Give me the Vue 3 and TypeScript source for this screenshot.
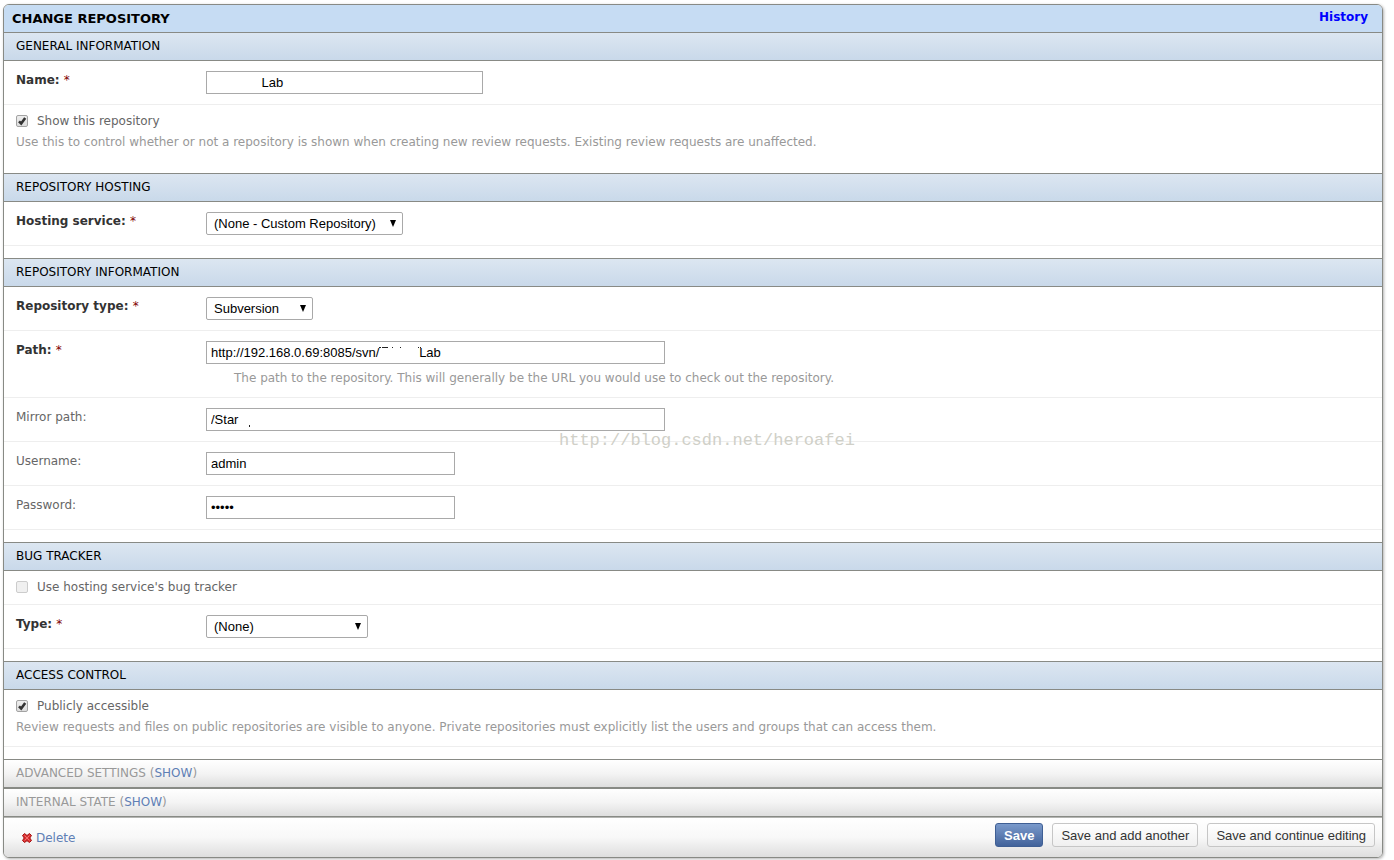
<script setup lang="ts">
import { ref } from 'vue'

const name = ref(' '.repeat(14) + 'Lab')
const path = ref('http://192.168.0.69:8085/svn/' + ' '.repeat(11) + 'Lab')
const mirrorPath = ref('/Star')
const username = ref('admin')
const password = ref('admin')
const visible = ref(true)
const publicAccess = ref(true)
const hostingBugTracker = ref(false)
</script>

<template>
  <main class="module">
    <header class="title">
      <h1>CHANGE REPOSITORY</h1>
      <a href="#history">History</a>
    </header>

    <form @submit.prevent>
      <section>
        <h2>GENERAL INFORMATION</h2>
        <div class="row">
          <label class="required" for="name">Name: <span class="star">*</span></label>
          <div class="field"><input id="name" v-model="name" class="text medium" type="text" /></div>
        </div>
        <div class="row stack borderless">
          <div class="check">
            <input id="visible" v-model="visible" type="checkbox" />
            <label for="visible">Show this repository</label>
          </div>
          <p class="help">Use this to control whether or not a repository is shown when creating new review requests. Existing review requests are unaffected.</p>
        </div>
      </section>

      <section>
        <h2>REPOSITORY HOSTING</h2>
        <div class="row">
          <label class="required" for="hosting">Hosting service: <span class="star">*</span></label>
          <div class="field">
            <select id="hosting" class="hosting"><option>(None - Custom Repository)</option></select>
          </div>
        </div>
      </section>

      <section>
        <h2>REPOSITORY INFORMATION</h2>
        <div class="row">
          <label class="required" for="tool">Repository type: <span class="star">*</span></label>
          <div class="field">
            <select id="tool" class="tool"><option>Subversion</option></select>
          </div>
        </div>
        <div class="row">
          <label class="required" for="path">Path: <span class="star">*</span></label>
          <div class="field">
            <input id="path" v-model="path" class="text long" type="text" />
            <svg class="marks path-marks" viewBox="0 0 48 10" aria-hidden="true">
              <path d="M2 .5h2M5 .5h6M15 .5h1M23 .5h1M41 .5h1M43 .5h1" />
            </svg>
            <p class="help indent">The path to the repository. This will generally be the URL you would use to check out the repository.</p>
          </div>
        </div>
        <div class="row">
          <label for="mirror">Mirror path:</label>
          <div class="field">
            <input id="mirror" v-model="mirrorPath" class="text long" type="text" />
            <svg class="marks mirror-marks" viewBox="0 0 2 2" aria-hidden="true"><path d="M1.500 0v2" /></svg>
          </div>
        </div>
        <div class="row">
          <label for="username">Username:</label>
          <div class="field"><input id="username" v-model="username" class="text short" type="text" /></div>
        </div>
        <div class="row">
          <label for="password">Password:</label>
          <div class="field"><input id="password" v-model="password" class="text short" type="password" /></div>
        </div>
      </section>

      <section>
        <h2>BUG TRACKER</h2>
        <div class="row stack">
          <div class="check">
            <input id="tracker" v-model="hostingBugTracker" type="checkbox" disabled />
            <label for="tracker">Use hosting service's bug tracker</label>
          </div>
        </div>
        <div class="row">
          <label class="required" for="type">Type: <span class="star">*</span></label>
          <div class="field">
            <select id="type" class="type"><option>(None)</option></select>
          </div>
        </div>
      </section>

      <section>
        <h2>ACCESS CONTROL</h2>
        <div class="row stack">
          <div class="check">
            <input id="public" v-model="publicAccess" type="checkbox" />
            <label for="public">Publicly accessible</label>
          </div>
          <p class="help">Review requests and files on public repositories are visible to anyone. Private repositories must explicitly list the users and groups that can access them.</p>
        </div>
      </section>

      <h2 class="collapsed">ADVANCED SETTINGS (<a href="#advanced">SHOW</a>)</h2>
      <h2 class="collapsed">INTERNAL STATE (<a href="#internal">SHOW</a>)</h2>

      <footer class="submit-row">
        <a class="delete" href="#delete">
          <svg viewBox="0 0 10 10" aria-hidden="true">
            <path d="M2.5 .5 5 2.500 7.500 .5 9.500 2.500 7.800 5 9.500 7.500 7.500 9.500 5 7.700 2.500 9.500 .5 7.500 2.200 5 .5 2.500z" />
            <path class="shine" d="M2.500 2.500 7.500 7.500M7.500 2.500 2.500 7.500" />
          </svg>
          Delete
        </a>
        <div class="actions">
          <button class="primary" type="submit">Save</button>
          <button type="button">Save and add another</button>
          <button type="button">Save and continue editing</button>
        </div>
      </footer>
    </form>

    <span class="watermark">http://blog.csdn.net/heroafei</span>
  </main>
</template>

<style>
body {
  background: #fff;
}
</style>

<style scoped>
.module {
  position: relative;
  margin: 4px 11px 2px 3px;
  border: 1px solid #888a85;
  border-radius: 6px;
  box-shadow: 1px 1px 3px rgba(0, 0, 0, 0.3);
  overflow: hidden;
  font: 12px/16px "DejaVu Sans", Verdana, sans-serif;
  color: #666;
}

.title {
  display: flex;
  justify-content: space-between;
  padding: 0 14px 0 8px;
  background: #c6dcf3;
  line-height: 27px;
}

.title h1 {
  margin: 0;
  font-size: 13px;
  font-weight: bold;
  color: #000;
}

.title a {
  font-weight: bold;
  line-height: 24px;
  color: #00f;
  text-decoration: none;
}

section {
  padding-bottom: 12px;
}

h2 {
  margin: 0;
  padding: 0 12px;
  border: solid #888a85;
  border-width: 1px 0;
  background: linear-gradient(#dce6f1, #c9d9ea);
  font-size: 12px;
  font-weight: normal;
  line-height: 27px;
  color: #000;
}

h2.collapsed {
  background: linear-gradient(#fff, #f4f4f4 50%, #dedede);
  color: #999;
}

.collapsed a,
.delete {
  color: #5f7fb5;
  text-decoration: none;
}

.row {
  display: flex;
  align-items: flex-start;
  padding: 10px 12px;
  border-bottom: 1px solid #eee;
}

.row > label {
  flex: 0 0 190px;
  line-height: 18px;
}

.row .required {
  font-weight: bold;
  color: #333;
}

.star {
  font-weight: normal;
  color: #800000;
}

.field {
  position: relative;
  display: flex;
  flex-direction: column;
  align-items: flex-start;
}

.stack {
  flex-direction: column;
  gap: 5px;
  padding: 8px 12px 9px;
}

.borderless {
  border-bottom: 0;
}

.check {
  display: flex;
  align-items: center;
  gap: 9px;
}

.help {
  margin: 0 0 2px;
  color: #999;
}

.help.indent {
  margin: 6px 0 1px 28px;
}

.text,
select {
  box-sizing: border-box;
  height: 23px;
  border: 1px solid #a9a9a9;
  background: #fff;
  font: 13px "Liberation Sans", Arial, sans-serif;
  color: #000;
}

.text {
  padding: 1px 4px;
}

.medium {
  width: 277px;
}

.long {
  width: 459px;
}

.short {
  width: 249px;
}

select {
  appearance: none;
  padding: 0 7px;
  border-radius: 2px;
  background: #fff url("data:image/svg+xml,%3Csvg xmlns='http://www.w3.org/2000/svg' width='6' height='7'%3E%3Cpath d='M0 0h6L3 7z'/%3E%3C/svg%3E") no-repeat right 6px top 7px;
}

.hosting {
  width: 197px;
}

.tool {
  width: 107px;
}

.type {
  width: 162px;
}

.marks {
  position: absolute;
  fill: none;
  stroke: #222;
}

.path-marks {
  top: 6px;
  left: 171px;
  width: 48px;
  height: 10px;
}

.mirror-marks {
  top: 17px;
  left: 42px;
  width: 2px;
  height: 2px;
}

input[type="checkbox"] {
  appearance: none;
  box-sizing: border-box;
  width: 12px;
  height: 12px;
  margin: 0;
  border: 1px solid #a3a3a3;
  border-radius: 2px;
  background: linear-gradient(#eee, #ddd);
}

input[type="checkbox"]:checked {
  background: url("data:image/svg+xml,%3Csvg xmlns='http://www.w3.org/2000/svg' width='10' height='10'%3E%3Cpath d='M2 5.300l2.200 2.200L8.200 2' fill='none' stroke='%23333' stroke-width='2.600'/%3E%3C/svg%3E") center no-repeat, linear-gradient(#eee, #ddd);
}

input[type="checkbox"]:disabled {
  border-color: #ccc;
  background: #f0f0f0;
}

.submit-row {
  display: flex;
  align-items: flex-start;
  justify-content: space-between;
  padding: 5px 7px 10px 18px;
  border-top: 1px solid #b4b5b2;
  background: linear-gradient(#fff, #f8f8f8 50%, #dedede);
}

.delete {
  display: flex;
  align-items: center;
  gap: 4px;
  margin-top: 7px;
}

.delete svg {
  width: 10px;
  height: 10px;
  fill: #d93030;
  stroke: #a31212;
}

.delete .shine {
  fill: none;
  stroke: #f07070;
}

.actions {
  display: flex;
  gap: 9px;
}

button {
  height: 24px;
  padding: 0 8px;
  border: 1px solid #c6c6c6;
  border-radius: 3px;
  background: linear-gradient(#fff, #f0f0f0);
  font: 13px "Liberation Sans", Arial, sans-serif;
  color: #333;
}

button.primary {
  border-color: #3f5f94;
  background: linear-gradient(#7a9acb, #42639b);
  font-weight: bold;
  color: #fff;
}

.watermark {
  position: absolute;
  top: 426px;
  left: 555px;
  font: 17px/20px "Liberation Mono", monospace;
  color: #d0d0c8;
  pointer-events: none;
}
</style>
